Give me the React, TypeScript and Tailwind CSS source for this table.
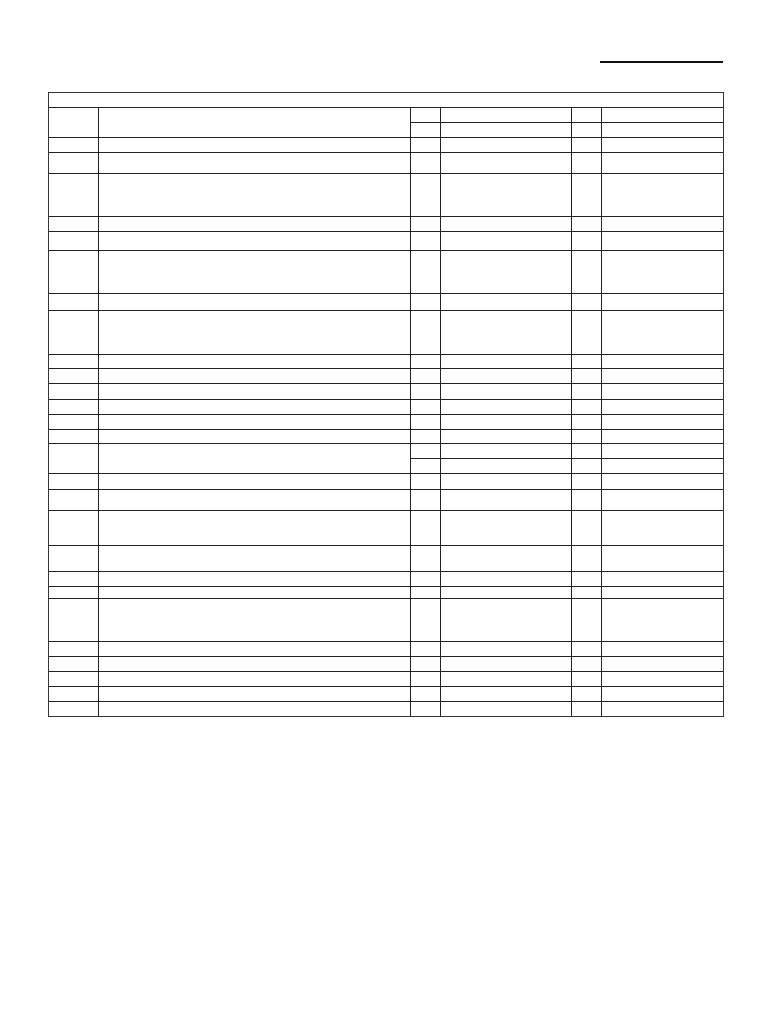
const rows = [
  { h: 30, split: true },
  { h: 15 },
  { h: 21 },
  { h: 43 },
  { h: 15 },
  { h: 19 },
  { h: 43 },
  { h: 17 },
  { h: 44 },
  { h: 14 },
  { h: 15 },
  { h: 16 },
  { h: 15 },
  { h: 15 },
  { h: 14 },
  { h: 30, split: true },
  { h: 16 },
  { h: 21 },
  { h: 35 },
  { h: 26 },
  { h: 15 },
  { h: 12 },
  { h: 43 },
  { h: 15 },
  { h: 15 },
  { h: 15 },
  { h: 15 },
  { h: 14, last: true },
];

function RightCells() {
  return (
    <>
      <div className="w-[30px] flex-shrink-0 border-r border-[#222]" />
      <div className="w-[131px] flex-shrink-0 border-r border-[#222]" />
      <div className="w-[30px] flex-shrink-0 border-r border-[#222]" />
      <div className="flex-1" />
    </>
  );
}

function Row({ h, split, last }: { h: number; split?: boolean; last?: boolean }) {
  return (
    <div
      className={["flex", last ? "" : "border-b border-[#222]"].join(" ")}
      style={{ height: h }}
    >
      <div className="w-[50px] flex-shrink-0 border-r border-[#222]" />
      <div className="w-[312px] flex-shrink-0 border-r border-[#222]" />
      {split ? (
        <div className="flex-1 flex flex-col">
          <div className="flex h-[15px] border-b border-[#222]">
            <RightCells />
          </div>
          <div className="flex flex-1">
            <RightCells />
          </div>
        </div>
      ) : (
        <div className="flex-1 flex">
          <RightCells />
        </div>
      )}
    </div>
  );
}

export default function App() {
  return (
    <div className="w-[768px] h-[1024px] bg-white" style={{ fontFamily: "'Liberation Sans', Arial, sans-serif" }}>
      {/* signature line top right */}
      <div className="flex justify-end pt-[61px] pr-[45px]">
        <div className="w-[123px] h-[2px] bg-[#111]" />
      </div>

      {/* form table */}
      <div className="mt-[29px] ml-[48px] w-[676px] border border-[#333]">
        <div className="h-[15px] border-b border-[#222]" />
        {rows.map((r, i) => (
          <Row key={i} h={r.h} split={r.split} last={r.last} />
        ))}
      </div>
    </div>
  );
}
